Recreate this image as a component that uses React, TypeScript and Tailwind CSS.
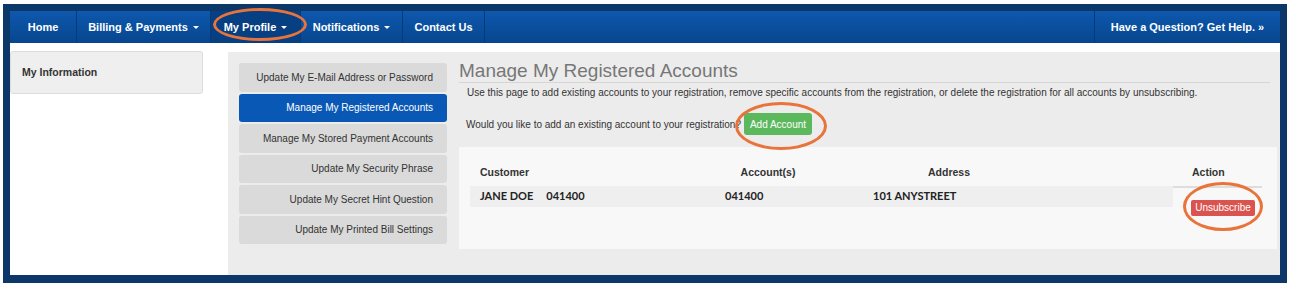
import React from "react";

const navItems = [
  { label: "Home", w: "w-[67px]", caret: false, active: false },
  { label: "Billing & Payments", w: "w-[134px]", caret: true, active: false },
  { label: "My Profile", w: "w-[90px]", caret: true, active: true },
  { label: "Notifications", w: "w-[102px]", caret: true, active: false },
  { label: "Contact Us", w: "w-[82px]", caret: false, active: false },
];

const tabs = [
  "Update My E-Mail Address or Password",
  "Manage My Registered Accounts",
  "Manage My Stored Payment Accounts",
  "Update My Security Phrase",
  "Update My Secret Hint Question",
  "Update My Printed Bill Settings",
];

const Caret = () => (
  <span className="ml-[5px] inline-block border-x-[3px] border-t-[3px] border-x-transparent border-t-white align-middle" />
);

const App = () => {
  return (
    <div className="relative w-[1294px] h-[288px] bg-white overflow-hidden pt-[4px] pl-[3px] font-['Liberation_Sans',Arial,sans-serif]">
      <div className="w-[1284px] h-[279px] bg-[#0b3868] pt-[7px] px-[7px] pb-[8px] flex flex-col">
        {/* top nav */}
        <div className="h-[32px] flex bg-linear-to-b from-[#0e58ae] to-[#07468f] text-white text-[11px] font-bold">
          {navItems.map((item) => (
            <div
              key={item.label}
              className={`${item.w} flex items-center justify-center border-r border-[#063a78] ${
                item.active ? "bg-[#063f82]" : ""
              }`}
            >
              {item.label}
              {item.caret && <Caret />}
            </div>
          ))}
          <div className="flex-1 border-r border-[#063a78]" />
          <div className="w-[185px] flex items-center justify-center">
            Have a Question? Get Help. »
          </div>
        </div>

        {/* body */}
        <div className="flex-1 bg-white flex">
          <div className="w-[193px] h-[43px] mt-[8px] bg-[#efefef] border border-[#dcdcdc] rounded-[3px] flex items-center pl-[11px] text-[10.5px] font-bold text-[#333]">
            My Information
          </div>

          <div className="flex-1 ml-[25px] mt-[9px] bg-[#ececec] flex gap-[12px] pt-[11px] pl-[11px]">
            <div className="w-[208px] flex flex-col gap-[2px]">
              {tabs.map((t, i) => (
                <div
                  key={t}
                  className={`h-[28.5px] rounded-[3px] flex items-center justify-end pr-[14px] text-[10px] ${
                    i === 1 ? "bg-[#0a58b6] text-white" : "bg-[#dadada] text-[#333]"
                  }`}
                >
                  {t}
                </div>
              ))}
            </div>

            <div className="flex-1 mr-[3px] flex flex-col">
              <h1 className="-mt-[2px] text-[19px] leading-[19px] text-[#777] pb-[2px] border-b border-[#d6d6d6] mr-[7px]">
                Manage My Registered Accounts
              </h1>
              <p className="mt-[2px] pl-[8px] text-[10px] text-[#333]">
                Use this page to add existing accounts to your registration, remove specific accounts from the
                registration, or delete the registration for all accounts by unsubscribing.
              </p>
              <div className="mt-[13px] pl-[7px] flex items-center text-[10px] text-[#333]">
                Would you like to add an existing account to your registration?
                <button className="ml-[3px] h-[22px] w-[68px] rounded-[3px] bg-[#5cb85c] text-white text-[10px]">
                  Add Account
                </button>
              </div>

              <div className="mt-[12px] h-[102px] bg-[#f8f8f8] pt-[13px] pl-[11px]">
                <div className="flex h-[26px] items-center text-[10.5px] font-bold text-[#333]">
                  <div className="w-[245px] pl-[10px]">Customer</div>
                  <div className="w-[106px] text-center">Account(s)</div>
                  <div className="w-[42px]" />
                  <div className="w-[172px] text-center">Address</div>
                  <div className="w-[138px]" />
                  <div className="w-[89px] pl-[19px]">Action</div>
                </div>
                <div className="flex">
                  <div className="w-[703px] h-[21px] bg-[#efefef] flex items-center text-[11px] font-bold text-[#222] font-['Lato',sans-serif]">
                    <div className="w-[245px] pl-[10px]">
                      JANE DOE<span className="ml-[13px]">041400</span>
                    </div>
                    <div className="w-[106px] pl-[10px]">041400</div>
                    <div className="w-[42px]" />
                    <div className="w-[172px] pl-[10px]">101 ANYSTREET</div>
                  </div>
                  <div className="w-[89px] border-t-2 border-[#dddddd] pl-[18px] pt-[6px]">
                    <button className="h-[16px] w-[64px] rounded-[2px] bg-[#d9534f] text-white text-[10px]">
                      Unsubscribe
                    </button>
                  </div>
                </div>
              </div>
            </div>
          </div>
        </div>
      </div>

      {/* annotation circles */}
      <div className="absolute left-[213px] top-[8px] w-[94px] h-[33px] rounded-[50%] border-[3px] border-[#e8743b]" />
      <div className="absolute left-[735px] top-[102px] w-[92px] h-[48px] rounded-[50%] border-[3px] border-[#e8743b]" />
      <div className="absolute left-[1183px] top-[182px] w-[80px] h-[49px] rounded-[50%] border-[3px] border-[#e8743b]" />
    </div>
  );
};

export default App;
